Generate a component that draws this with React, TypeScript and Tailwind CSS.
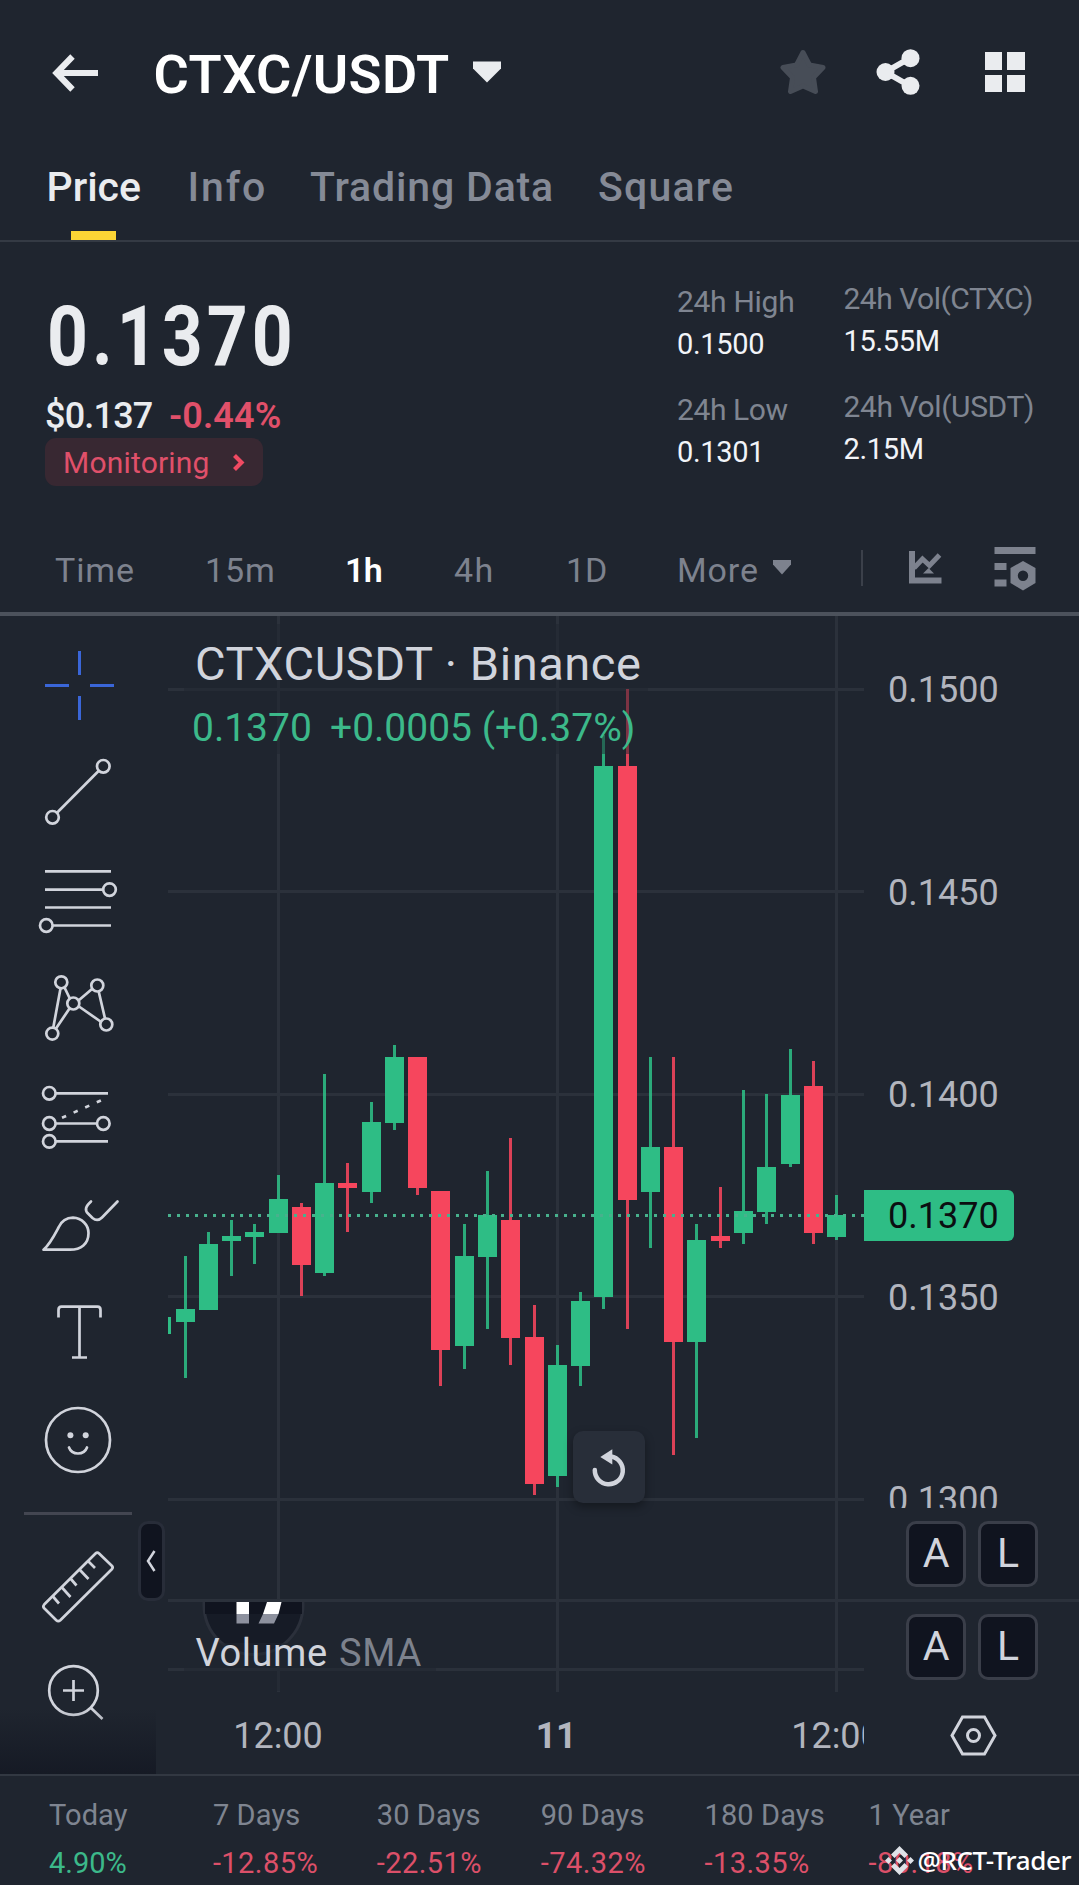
import React from "react";

const GREEN = "#2ebd85";
const RED = "#f6465d";

/* x (body left), wick top, body top, body bottom, wick bottom, rising */
type Candle = [number, number, number, number, number, boolean];

const candles: Candle[] = [
  [176, 1256, 1309, 1322, 1378, true],
  [199, 1232, 1244, 1310, 1310, true],
  [222, 1220, 1236, 1241, 1276, true],
  [245, 1224, 1232, 1237, 1264, true],
  [269, 1175, 1199, 1233, 1233, true],
  [292, 1203, 1207, 1265, 1296, false],
  [315, 1074, 1183, 1273, 1276, true],
  [338, 1163, 1183, 1188, 1232, false],
  [362, 1102, 1122, 1192, 1203, true],
  [385, 1045, 1057, 1123, 1130, true],
  [408, 1057, 1057, 1188, 1195, false],
  [431, 1191, 1191, 1350, 1386, false],
  [455, 1224, 1256, 1346, 1369, true],
  [478, 1171, 1215, 1257, 1329, true],
  [501, 1138, 1220, 1338, 1365, false],
  [525, 1305, 1337, 1484, 1495, false],
  [548, 1345, 1365, 1476, 1487, true],
  [571, 1292, 1301, 1366, 1386, true],
  [594, 735, 766, 1297, 1309, true],
  [618, 689, 766, 1200, 1329, false],
  [641, 1057, 1147, 1192, 1248, true],
  [664, 1057, 1147, 1342, 1455, false],
  [687, 1224, 1240, 1342, 1438, true],
  [711, 1187, 1236, 1241, 1248, false],
  [734, 1090, 1211, 1233, 1244, true],
  [757, 1094, 1167, 1212, 1224, true],
  [781, 1049, 1095, 1164, 1167, true],
  [804, 1061, 1086, 1233, 1244, false],
  [827, 1195, 1215, 1237, 1240, true],
];

const tabs = [
  { label: "Info", cls: "w-[124px] tracking-[1.9px] pl-[1.5px]" },
  { label: "Trading Data", cls: "w-[288px] tracking-[0.85px]" },
  { label: "Square", cls: "tracking-[1.2px]" },
];

const periods = [
  { label: "Today", value: "4.90%", up: true },
  { label: "7 Days", value: "-12.85%", up: false },
  { label: "30 Days", value: "-22.51%", up: false },
  { label: "90 Days", value: "-74.32%", up: false },
  { label: "180 Days", value: "-13.35%", up: false },
  { label: "1 Year", value: "-80.18%", up: false },
];

function Header() {
  return (
    <header className="flex h-[144px] items-center">
      <svg className="ml-[52px] mt-px" width="47" height="38" viewBox="0 0 47 38" fill="none" stroke="#eaecef" strokeWidth="6.2">
        <path d="M3 19H46M20.5 2.5L4.5 19L20.5 35.5" />
      </svg>
      <h1 className="ml-[54.6px] mt-[5px] w-[319.4px] whitespace-nowrap text-[54px] font-semibold leading-[64px] tracking-[0.4px] text-white">
        CTXC/USDT
      </h1>
      <svg width="28" height="22" viewBox="0 0 28 22" fill="#eaecef">
        <path d="M0 0.5H28V7.5L14 21.5L0 7.5Z" />
      </svg>
      <svg className="ml-[279px]" width="46" height="48" viewBox="0 0 46 48" fill="#474d57" stroke="#474d57" strokeWidth="5" strokeLinejoin="round">
        <path d="M23 4.5L29.5 17L43 19.5L33.5 29.5L35.5 43.5L23 38L10.5 43.5L12.5 29.5L3 19.5L16.5 17Z" />
      </svg>
      <svg className="ml-[50.5px]" width="44" height="46" viewBox="0 0 44 46" fill="#eaecef">
        <path d="M9.500 23L34 9M9.500 23L34 37" stroke="#eaecef" strokeWidth="6" />
        <circle cx="9.500" cy="23" r="9" />
        <circle cx="34.500" cy="9.200" r="9" />
        <circle cx="34.500" cy="36.800" r="9" />
      </svg>
      <div className="ml-[64.5px] grid grid-cols-2 gap-[5px]">
        <i className="size-[17.5px] bg-[#eaecef]" />
        <i className="size-[17.5px] bg-[#eaecef]" />
        <i className="size-[17.5px] bg-[#eaecef]" />
        <i className="size-[17.5px] bg-[#eaecef]" />
      </div>
    </header>
  );
}

function Tabs() {
  return (
    <nav className="flex h-[98px] border-b-2 border-[#343a44] text-[41px] font-medium leading-[50px]">
      <div className="ml-[46.5px] flex w-[139.5px] flex-col pt-[18px]">
        <span className="text-[#eaecef]">Price</span>
        <i className="ml-[24.5px] mt-[19px] h-[9px] w-[45px] bg-[#fcd535]" />
      </div>
      {tabs.map((t) => (
        <span key={t.label} className={`whitespace-nowrap pt-[18px] text-[#858a96] ${t.cls}`}>
          {t.label}
        </span>
      ))}
    </nav>
  );
}

function Stat({ label, value, cls }: { label: string; value: string; cls: string }) {
  return (
    <div className="flex h-[108px] flex-col whitespace-nowrap">
      <span className={`text-[30px] leading-[42px] text-[#7f8591] ${cls}`}>{label}</span>
      <span className="text-[29px] leading-[42px] tracking-[-0.3px] text-[#f2f4f8]">{value}</span>
    </div>
  );
}

function Ticker() {
  return (
    <section className="flex h-[288px]">
      <div className="w-[677px] pl-[45px] pt-[51px]">
        <div className="ml-[2px] w-[290px] origin-left scale-x-[0.860] text-[83px] font-bold leading-[88px] tracking-[4.700px] text-[#eaecef]">0.1370</div>
        <div className="mt-[14px] flex text-[36px] font-medium leading-[43px]">
          <span className="w-[124px] tracking-[-0.800px] text-[#eaecef]">$0.137</span>
          <span className="font-semibold tracking-[0.1px] text-[#e0506a]">-0.44%</span>
        </div>
        <div className="flex h-[48px] w-[218px] items-center rounded-[11px] bg-[#382832] pl-[18px] pt-px">
          <span className="w-[170px] text-[30px] leading-[44px] tracking-[0.2px] text-[#e0506a]">Monitoring</span>
          <svg width="12" height="17" viewBox="0 0 12 17" fill="none" stroke="#f04a62" strokeWidth="4.200">
            <path d="M1.500 1.500L8.500 8.500L1.500 15.500" />
          </svg>
        </div>
      </div>
      <div className="w-[166.5px] pt-[39px]">
        <Stat label="24h High" value="0.1500" cls="tracking-[-0.3px]" />
        <Stat label="24h Low" value="0.1301" cls="tracking-[-0.4px]" />
      </div>
      <div className="pt-[36px]">
        <Stat label="24h Vol(CTXC)" value="15.55M" cls="tracking-[-0.5px]" />
        <Stat label="24h Vol(USDT)" value="2.15M" cls="tracking-[-0.4px]" />
      </div>
    </section>
  );
}

function Intervals() {
  return (
    <nav className="flex h-[86px] border-b-4 border-[#4c525c] pt-[19px] text-[34px] leading-[42px] text-[#7d828e]">
      <span className="ml-[55px] w-[150px] tracking-[0.9px]">Time</span>
      <span className="w-[140px] tracking-[0.9px]">15m</span>
      <span className="w-[109px] font-semibold tracking-[-0.7px] text-white">1h</span>
      <span className="w-[112px] tracking-[1.3px]">4h</span>
      <span className="w-[111px]">1D</span>
      <span className="w-[96px] tracking-[0.9px]">More</span>
      <svg className="mt-[11px]" width="18" height="15" viewBox="0 0 18 15" fill="#7d828e">
        <path d="M0 0H18V4.500L9 14.500L0 4.500Z" />
      </svg>
      <i className="ml-[69.500px] mt-px h-[36px] w-[2px] bg-[#3b404a]" />
      <svg className="ml-[46px] mt-[2px]" width="33" height="33" viewBox="0 0 33 33" fill="none" stroke="#7d828e">
        <path d="M3 0V29.500H32.500" strokeWidth="6" />
        <path d="M5 17L13.500 8L20.500 14.500L30.500 4" strokeWidth="5" />
        <path d="M19.500 17L25 22.500H14Z" fill="#7d828e" stroke="none" />
      </svg>
      <svg className="ml-[52px] -mt-[2px]" width="42" height="44" viewBox="0 0 42 44" fill="#7d828e">
        <path d="M0.500 0H41.500V7H0.500ZM0.500 16H12.500V23H0.500ZM0.500 32.500H12.500V39.500H0.500Z" />
        <path fillRule="evenodd" d="M29 14L41.500 21V36L29 43.500L16.500 36V21ZM29 23.500A5.200 5.200 0 1 0 29 33.900A5.200 5.200 0 1 0 29 23.500Z" />
      </svg>
    </nav>
  );
}

function ToolIcon({ y, children }: { y: number; children: React.ReactNode }) {
  return (
    <svg className="block h-[108px] w-[156px] shrink-0" viewBox={`0 ${y} 156 108`} fill="none" stroke="#d1d4dc" strokeWidth="2.700">
      {children}
    </svg>
  );
}

function Toolbar() {
  return (
    <aside className="relative flex w-[168px] flex-col pt-[16px]">
      <ToolIcon y={632}>
        <path stroke="#3a66d8" strokeWidth="3" d="M79.500 651V675M79.500 696V720M45 685.500H69M90 685.500H114" />
      </ToolIcon>
      <ToolIcon y={740}>
        <circle cx="103.300" cy="766.300" r="6.300" />
        <circle cx="52.500" cy="817.300" r="6.300" />
        <path d="M57 812.800L98.800 770.800" />
      </ToolIcon>
      <ToolIcon y={848}>
        <path d="M45 871.300H111M45 889.600H103M45 907.500H111M53 925.500H111" />
        <circle cx="109.500" cy="889.600" r="6.300" />
        <circle cx="46.300" cy="925.500" r="6.300" />
      </ToolIcon>
      <ToolIcon y={956}>
        <circle cx="61.300" cy="982.300" r="6" />
        <circle cx="97.300" cy="985.500" r="6" />
        <circle cx="73.300" cy="1003.500" r="6" />
        <circle cx="52.300" cy="1033.600" r="6" />
        <circle cx="106.300" cy="1024.500" r="6" />
        <path d="M60.500 988.500L53.300 1027.500M64.500 987.500L69.800 998.500M78.500 1000.500L92 989M98.700 991.500L105 1018.500M79 1006.500L100.500 1021.500M69.500 1008.500L56 1028.500" />
      </ToolIcon>
      <ToolIcon y={1064}>
        <circle cx="49.300" cy="1093.300" r="6.300" />
        <circle cx="49.300" cy="1123.500" r="6.300" />
        <circle cx="49.300" cy="1141.400" r="6.300" />
        <circle cx="103.300" cy="1123.500" r="6.300" />
        <path d="M55.500 1093.300H108M55.500 1123.500H97M55.500 1141.400H108" />
        <path strokeDasharray="4.500 8.200" d="M62 1117.800L103 1099.500" />
      </ToolIcon>
      <ToolIcon y={1172}>
        <path strokeLinejoin="round" d="M43.500 1249.700C50 1244 54 1236 58.500 1227.500C62 1220 67.500 1217.700 73 1217.700C82 1218 88.500 1225 88.500 1233C88.500 1244 81 1249.700 70 1249.700Z" />
        <path strokeLinecap="round" d="M117.500 1201.500L102 1217.500C98.500 1221 95.500 1220.500 92.500 1218L88 1213.500C84.500 1210 85.500 1206.500 91 1201.500" />
      </ToolIcon>
      <ToolIcon y={1280}>
        <path d="M58.500 1317.500V1310C58.500 1308 59.500 1306.700 61.500 1306.700H97.500C99.500 1306.700 100.500 1308 100.500 1310V1317.500M79.500 1306.700V1357.500M72 1357.500H87" />
      </ToolIcon>
      <ToolIcon y={1388}>
        <circle cx="78" cy="1440" r="32" />
        <circle cx="70.400" cy="1435.300" r="3" fill="#d1d4dc" stroke="none" />
        <circle cx="85.700" cy="1435.300" r="3" fill="#d1d4dc" stroke="none" />
        <path strokeLinecap="round" d="M69 1447.500C72 1455.500 84 1455.500 87 1447.500" />
      </ToolIcon>
      <i className="ml-[24px] mt-[16px] h-[3px] w-[108px] shrink-0 bg-[#434651]" />
      <div className="flex flex-col pt-[18px]">
        <ToolIcon y={1533}>
          <path strokeLinejoin="round" d="M95.500 1553.500Q97.300 1551.800 99.100 1553.500L111.800 1565.700Q113.500 1567.500 111.800 1569.300L60.300 1620.200Q58.300 1622 56.300 1620.200L44.200 1608.300Q42.500 1606.500 44.200 1604.500Z" />
          <path d="M88 1561L95 1568M79.500 1569.500L88.500 1579M70.500 1578.500L76.500 1585.500M61.500 1587L70.500 1597M52.500 1596L59 1603.500" />
        </ToolIcon>
        <ToolIcon y={1641}>
          <circle cx="73.500" cy="1690.500" r="24.300" />
          <path d="M63 1690.500H84M73.500 1680V1701M91 1708L102.500 1719" />
        </ToolIcon>
      </div>
      <i className="absolute bottom-0 left-0 h-[66px] w-[156px] bg-linear-to-b from-[#131722]/0 to-[#131722]/80" />
      <div className="absolute left-[138px] top-[905px] flex h-[80px] w-[27px] items-center justify-center rounded-[10px] border-[3px] border-[#282d39] bg-[#10141f]">
        <svg className="-ml-px" width="10" height="22" viewBox="0 0 10 22" fill="none" stroke="#d1d4dc" strokeWidth="2.500">
          <path d="M8.500 1L2 11L8.500 21" />
        </svg>
      </div>
    </aside>
  );
}

function Plot() {
  return (
    <svg className="block" width="696" height="1076" viewBox="168 616 696 1076" shapeRendering="crispEdges">
      <g fill="#2b313b">
        {[688, 890, 1093, 1295, 1498, 1599, 1668].map((y) => (
          <rect key={y} x="168" y={y} width="696" height="3" />
        ))}
        {[277, 556, 835].map((x) => (
          <rect key={x} x={x} y="616" width="3" height="1076" />
        ))}
      </g>
      <rect x="168" y="1317" width="3" height="17" fill={GREEN} />
      {candles.map(([x, wt, bt, bb, wb, up]) => (
        <g key={x} fill={up ? GREEN : RED}>
          <rect x={x + 8} y={wt} width="3" height={wb - wt} opacity="0.880" />
          <rect x={x} y={bt} width="19" height={bb - bt} />
        </g>
      ))}
      <path d="M168 1215.500H864" stroke="#48b18d" strokeWidth="3" strokeDasharray="3 6" />
    </svg>
  );
}

function ScaleButtons() {
  return (
    <div className="flex gap-[12px] pl-[42px] text-center text-[41px] leading-[59px] text-[#d1d4dc]">
      <span className="h-[66px] w-[60px] rounded-[10px] border-[3px] border-[#3a3e49] bg-[#10141f]">A</span>
      <span className="h-[66px] w-[60px] rounded-[10px] border-[3px] border-[#3a3e49] bg-[#10141f]">L</span>
    </div>
  );
}

const priceTop = (price: number) => 74 + ((0.15 - price) / 0.005) * 202.600;

function PriceAxis() {
  return (
    <div className="flex w-[215px] flex-col">
      <div className="relative h-[892px] overflow-hidden text-[36px] leading-[42px] text-[#b2b5be]">
        {[0.15, 0.145, 0.14, 0.135, 0.13].map((p) => (
          <span key={p} className="absolute left-[24px] -translate-y-1/2" style={{ top: priceTop(p) }}>
            {p.toFixed(4)}
          </span>
        ))}
        <span className="absolute left-0 top-[574px] h-[51px] w-[150px] rounded-r-[6px] bg-[#2ebd85] pl-[24px] pt-px leading-[51px] text-[#0b0e11]">
          0.1370
        </span>
      </div>
      <div className="flex flex-col gap-[27px] pt-[13px]">
        <ScaleButtons />
        <ScaleButtons />
      </div>
      <svg className="ml-[86px] mt-[35px]" width="47" height="41" viewBox="0 0 47 41" fill="none" stroke="#d1d4dc" strokeWidth="3">
        <path d="M12.500 2H34.500L45 20.500L34.500 39H12.500L2 20.500Z" />
        <circle cx="23.500" cy="20.500" r="6" />
      </svg>
    </div>
  );
}

function Legend() {
  return (
    <>
      <div className="absolute left-[16px] top-[8px] h-[130px] w-[464px] bg-[#1f252f]/50" />
      <div className="absolute left-[27px] top-[19px] whitespace-nowrap text-[47px] leading-[58px] tracking-[0.550px] text-[#d1d4dc]">
        CTXCUSDT · Binance
      </div>
      <div className="absolute left-[24px] top-[89px] flex whitespace-nowrap text-[39px] leading-[46px] text-[#3cb98a]">
        <span className="w-[138px]">0.1370</span>
        <span>+0.0005 (+0.37%)</span>
      </div>
    </>
  );
}

function VolumeLegend() {
  return (
    <>
      <svg className="absolute left-[34px] top-[986px]" width="104" height="54" viewBox="202 1602 104 54">
        <circle cx="253.500" cy="1605" r="49.500" fill="#161b26" stroke="#2b303b" strokeWidth="3" />
        <path d="M205 1602H302V1614H205Z" fill="#10141f" />
        <path d="M236.500 1602H249V1614H236.500ZM267 1602H281.500L278.500 1614H263Z" fill="#ffffff" />
        <path d="M236.500 1614H249V1623.500H236.500ZM263 1614H278.500L274 1623.500H258.500Z" fill="#8d919e" />
      </svg>
      <i className="absolute left-[16px] top-[1027px] h-[48px] w-[252px] bg-[#1f252f]/50" />
      <div className="absolute left-[27.500px] top-[1014px] flex text-[38px] leading-[46px]">
        <span className="w-[143.500px] tracking-[0.6px] text-[#d1d4dc]">Volume</span>
        <span className="tracking-[0.700px] text-[#7d828d]">SMA</span>
      </div>
    </>
  );
}

function ResetButton() {
  return (
    <div className="absolute left-[405px] top-[815px] flex h-[72px] w-[72px] items-center justify-center rounded-[10px] bg-[#282e39] shadow-[0_4px_10px_rgba(0,0,0,0.35)]">
      <svg width="72" height="72" viewBox="573 1431 72 72">
        <path d="M594.800 1470A14 14 0 1 0 611 1456.500" fill="none" stroke="#d1d4dc" strokeWidth="4.500" strokeLinecap="round" />
        <path d="M600.300 1457L612.300 1449.300V1464.500Z" fill="#d1d4dc" />
      </svg>
    </div>
  );
}

function Chart() {
  return (
    <section className="relative flex h-[1160px] border-b-2 border-[#323842]">
      <Toolbar />
      <div className="relative flex w-[696px] flex-col overflow-hidden">
        <Plot />
        <div className="relative h-[82px] text-[36px] leading-[42px] text-[#b2b5be]">
          <span className="absolute left-[110px] top-[23px] -translate-x-1/2">12:00</span>
          <span className="absolute left-[388px] top-[23px] -translate-x-1/2 font-bold tracking-[-0.300px]">11</span>
          <span className="absolute left-[668px] top-[23px] -translate-x-1/2">12:00</span>
        </div>
        <VolumeLegend />
        <Legend />
        <ResetButton />
      </div>
      <PriceAxis />
      <i className="absolute right-0 top-[983px] h-[3px] w-[215px] bg-[#2b313b]" />
    </section>
  );
}

function Performance() {
  return (
    <footer className="relative flex h-[109px] pl-[49px] pt-[20px] text-[29px]">
      {periods.map((p) => (
        <div key={p.label} className="flex w-[163.900px] shrink-0 flex-col whitespace-nowrap">
          <span className="h-[48px] leading-[38px] tracking-[0.100px] text-[#7f8591]">{p.label}</span>
          <span className={p.up ? "leading-[38px] text-[#3cb98a]" : "leading-[38px] tracking-[0.450px] text-[#dc5069]"}>{p.value}</span>
        </div>
      ))}
      <div className="absolute right-[8px] top-[69px] flex items-center text-white">
        <svg className="mr-[4px]" width="29" height="29" viewBox="0 0 29 29" fill="#dfe2e8">
          <path d="M14.500 0L23 8.500L19.500 12L14.500 7L9.500 12L6 8.500ZM3.500 11L7 14.500L3.500 18L0 14.500ZM25.500 11L29 14.500L25.500 18L22 14.500ZM14.500 11L18 14.500L14.500 18L11 14.500ZM6 20.500L9.500 17L14.500 22L19.500 17L23 20.500L14.500 29Z" />
        </svg>
        <span className="whitespace-nowrap font-['Noto_Sans',sans-serif] text-[26px] font-medium leading-[30px] tracking-[-0.400px]">@RCT-Trader</span>
      </div>
    </footer>
  );
}

export default function App() {
  return (
    <main className="h-[1885px] w-[1079px] overflow-hidden bg-[#1f252f] font-['Roboto',sans-serif]">
      <Header />
      <Tabs />
      <Ticker />
      <Intervals />
      <Chart />
      <Performance />
    </main>
  );
}
